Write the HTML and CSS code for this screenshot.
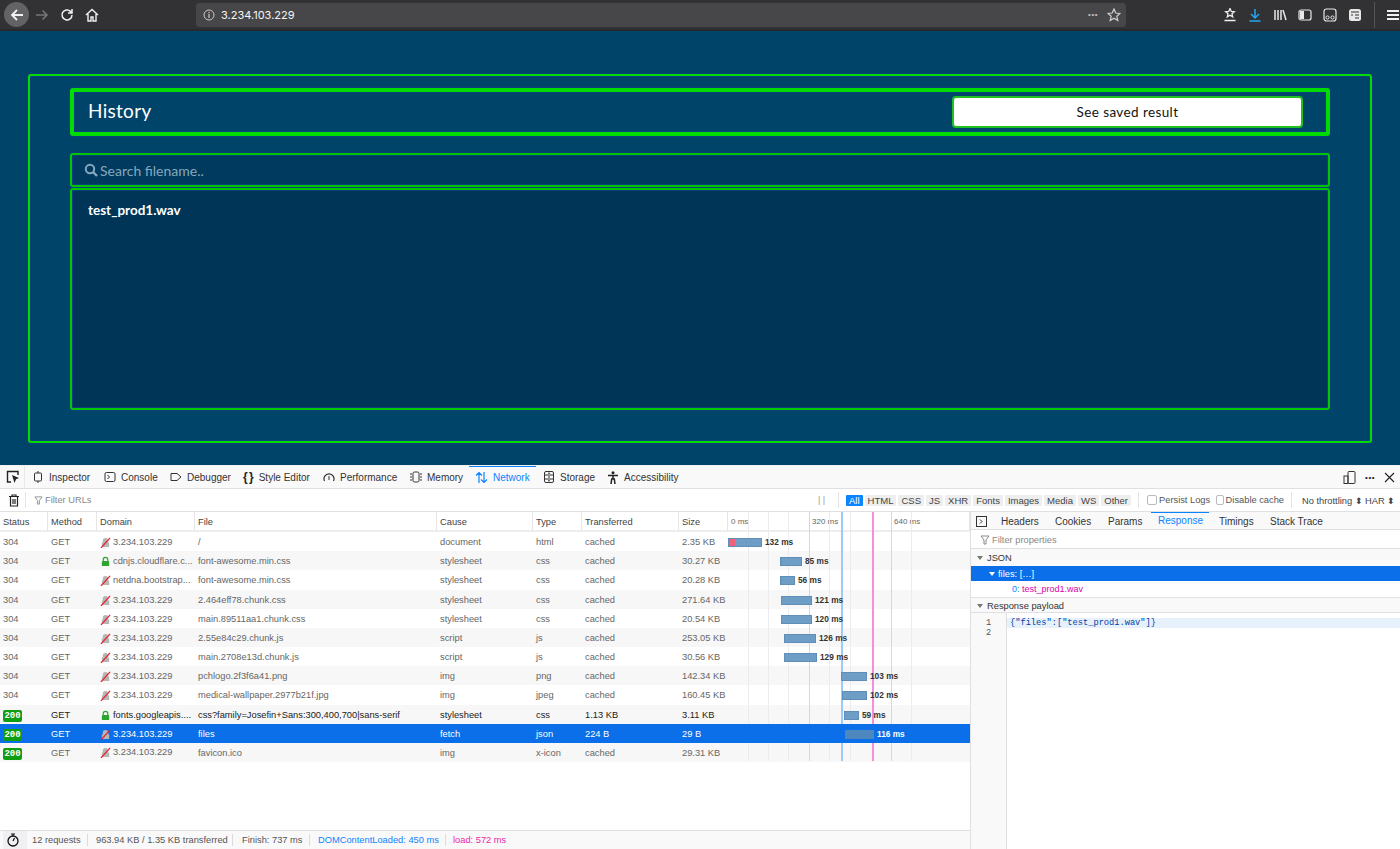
FILE: index.html
```html
<!DOCTYPE html>
<html lang="en">
<head>
  <meta charset="UTF-8">
  <title>3.234.103.229</title>
  <link rel="stylesheet" href="styles.css">
</head>
<body>

  <svg class="defs" width="0" height="0">
    <symbol id="i-nolock" viewBox="0 0 12 12">
      <path d="M3 6V4a3 3 0 0 1 6 0v2h1v5H2V6z" fill="#b5b5b5"/>
      <path d="M1 12L11 1" stroke="#e8202a" stroke-width="1.3"/>
    </symbol>
    <symbol id="i-lock" viewBox="0 0 12 12">
      <path d="M3.5 6V4a2.5 2.5 0 0 1 5 0v2" fill="none" stroke="currentColor" stroke-width="1.3"/>
      <rect x="2" y="5.5" width="8" height="5.5" rx="1" fill="currentColor"/>
    </symbol>
    <symbol id="i-filter" viewBox="0 0 10 10">
      <path d="M1 1h8L6 5v4H4V5z" fill="none" stroke="#8a8a8a"/>
    </symbol>
  </svg>

  <!-- browser toolbar -->
  <header class="browser-bar">
    <div class="nav-btns">
      <span class="nav-btn back">
        <svg width="16" height="16" viewBox="0 0 16 16"><path d="M14 8H3M8 3L3 8l5 5" fill="none" stroke="#f2f2f2" stroke-width="1.8"/></svg>
      </span>
      <span class="nav-btn">
        <svg width="14" height="14" viewBox="0 0 14 14"><path d="M1 7h11M7.5 2.5L12 7l-4.5 4.5" fill="none" stroke="#77777a" stroke-width="1.5"/></svg>
      </span>
      <span class="nav-btn">
        <svg width="14" height="14" viewBox="0 0 14 14"><path d="M12 7a5 5 0 1 1-1.5-3.6L12 5M12 1v4H8" fill="none" stroke="#f2f2f2" stroke-width="1.5"/></svg>
      </span>
      <span class="nav-btn">
        <svg width="14" height="14" viewBox="0 0 14 14"><path d="M1 7l6-5.5L13 7M3 6v7h3V9h2v4h3V6" fill="none" stroke="#f2f2f2" stroke-width="1.4"/></svg>
      </span>
    </div>
    <div class="url-bar">
      <svg class="url-info" width="12" height="12" viewBox="0 0 12 12"><circle cx="6" cy="6" r="5" fill="none" stroke="#c8c8c8"/><path d="M6 5v4M6 3v1.2" stroke="#c8c8c8" stroke-width="1.2"/></svg>
      <span class="url-text">3.234.103.229</span>
      <span class="url-dots">•••</span>
      <svg width="14" height="14" viewBox="0 0 14 14"><path d="M7 1l1.8 4 4.2.4-3.2 2.8 1 4.3L7 10.300l-3.8 2.2 1-4.3L1 5.400 5.200 5z" fill="none" stroke="#d0d0d0" stroke-width="1.2"/></svg>
    </div>
    <div class="tool-icons">
      <svg width="14" height="14" viewBox="0 0 14 14"><path d="M7 .5l1.300 3 3 .3-2.300 2 .7 3L7 7.200 4.300 8.800l.7-3-2.300-2 3-.3zM1.500 12.500h11" fill="none" stroke="#f0f0f0" stroke-width="1.3"/></svg>
      <svg width="14" height="14" viewBox="0 0 14 14"><path d="M7 1v8M3 6l4 4 4-4M1.500 13h11" fill="none" stroke="#20a8f0" stroke-width="1.5"/></svg>
      <svg width="14" height="14" viewBox="0 0 14 14"><path d="M2 2v10M5 2v10M8 2v10M10 2l3 10" fill="none" stroke="#e8e8e8" stroke-width="1.5"/></svg>
      <svg width="14" height="14" viewBox="0 0 14 14"><rect x="1" y="2" width="12" height="10" rx="2" fill="none" stroke="#e8e8e8" stroke-width="1.2"/><path d="M2 3h4v8H2z" fill="#e8e8e8"/></svg>
      <svg width="14" height="14" viewBox="0 0 14 14"><rect x="1" y="1" width="12" height="12" rx="2.500" fill="none" stroke="#e8e8e8" stroke-width="1.2"/><circle cx="4.500" cy="9.500" r="1.600" fill="none" stroke="#e8e8e8"/><circle cx="9.500" cy="9.500" r="1.600" fill="none" stroke="#e8e8e8"/></svg>
      <svg width="14" height="14" viewBox="0 0 14 14"><rect x="1" y="1" width="12" height="12" rx="2.500" fill="#e8e8e8"/><path d="M3 4h8M7 7h4M7 10h4M3 7h2" stroke="#323234" stroke-width="1.2"/></svg>
      <span class="tool-sep"></span>
      <svg width="14" height="14" viewBox="0 0 14 14"><path d="M1 3h12M1 7h12M1 11h12" stroke="#f0f0f0" stroke-width="1.8"/></svg>
    </div>
  </header>

  <!-- page content -->
  <main class="page">
    <section class="outer-box">
      <div class="history-head">
        <h1>History</h1>
        <button class="saved-btn">See saved result</button>
      </div>
      <div class="search-box">
        <svg width="14" height="14" viewBox="0 0 14 14"><circle cx="6" cy="6" r="4.200" fill="none" stroke="#86a8bd" stroke-width="2"/><path d="M9 9l4 4" stroke="#86a8bd" stroke-width="2.400"/></svg>
        <span>Search filename..</span>
      </div>
      <div class="file-list">
        <div class="file-item">test_prod1.wav</div>
      </div>
    </section>
  </main>

  <!-- devtools -->
  <section class="devtools">
    <div class="dt-tabs">
      <span class="pick-icon">
        <svg width="14" height="14" viewBox="0 0 14 14"><path d="M5 12H1.500V1.500H12V5" fill="none" stroke="#222" stroke-width="1.4"/><path d="M6 5l7 3-3 1.200L8.500 13z" fill="#222"/></svg>
      </span>
      <span class="dt-tab tab-inspector">
        <svg width="12" height="12" viewBox="0 0 12 12"><rect x="2.500" y="2" width="7" height="8" rx="1" fill="none" stroke="#333"/><path d="M6 0v2M6 10v2" stroke="#333"/></svg>Inspector
      </span>
      <span class="dt-tab tab-console">
        <svg width="12" height="12" viewBox="0 0 12 12"><rect x="1" y="1.500" width="10" height="9" rx="1.500" fill="none" stroke="#333"/><path d="M3.500 4L5.500 6 3.500 8" fill="none" stroke="#333"/></svg>Console
      </span>
      <span class="dt-tab tab-debugger">
        <svg width="12" height="12" viewBox="0 0 12 12"><path d="M1 2.500h6l4 3.500-4 3.500H1z" fill="none" stroke="#333"/></svg>Debugger
      </span>
      <span class="dt-tab tab-style">
        <span class="braces">{ }</span>Style Editor
      </span>
      <span class="dt-tab tab-perf">
        <svg width="12" height="12" viewBox="0 0 12 12"><path d="M1.500 10A5 5 0 1 1 10.500 10" fill="none" stroke="#333" stroke-width="1.2"/><path d="M6 9V5" stroke="#333"/></svg>Performance
      </span>
      <span class="dt-tab tab-memory">
        <svg width="12" height="12" viewBox="0 0 12 12"><rect x="3" y="1" width="6" height="10" rx="1.500" fill="none" stroke="#333"/><path d="M0 3h2M0 6h2M0 9h2M10 3h2M10 6h2M10 9h2" stroke="#333"/></svg>Memory
      </span>
      <span class="dt-tab tab-network">
        <svg width="13" height="13" viewBox="0 0 13 13"><path d="M4 12V1.500M1 4.500l3-3 3 3M9 1v10.500M6 8.500l3 3 3-3" fill="none" stroke="#0a84ff" stroke-width="1.2"/></svg>Network
      </span>
      <span class="dt-tab tab-storage">
        <svg width="12" height="12" viewBox="0 0 12 12"><rect x="1.500" y=".5" width="9" height="11" rx="1.500" fill="none" stroke="#333"/><path d="M1.500 4h9M1.500 8h9M5 2.200h2M5 6h2M5 9.800h2" stroke="#333"/></svg>Storage
      </span>
      <span class="dt-tab tab-a11y">
        <svg width="12" height="13" viewBox="0 0 12 13"><circle cx="6" cy="1.800" r="1.500" fill="#222"/><path d="M1 4.500h10M6 4.500V8M4 13l.7-5h2.600l.7 5" fill="none" stroke="#222" stroke-width="1.5"/></svg>Accessibility
      </span>
      <span class="dt-right">
        <svg width="13" height="13" viewBox="0 0 13 13"><rect x="5" y=".5" width="7" height="12" rx="1" fill="none" stroke="#333"/><rect x="1" y="5" width="4" height="7.500" fill="none" stroke="#333"/></svg>
        <span class="dots">•••</span>
        <svg width="11" height="11" viewBox="0 0 11 11"><path d="M1 1l9 9M10 1l-9 9" stroke="#222" stroke-width="1.1"/></svg>
      </span>
    </div>

    <div class="dt-filter">
      <svg class="trash" width="12" height="13" viewBox="0 0 12 13"><path d="M1 2.500h10M4 2.500V1h4v1.500M2.500 2.500V12h7V2.500M5 5v5M7 5v5" fill="none" stroke="#222" stroke-width="1.2"/></svg>
      <span class="vsep sep-trash"></span>
      <svg width="9" height="9"><use href="#i-filter"/></svg>
      <span class="filter-url">Filter URLs</span>
      <span class="pause">| |</span>
      <span class="vsep"></span>
      <div class="chips">
        <span class="chip chip-on">All</span>
        <span class="chip">HTML</span>
        <span class="chip">CSS</span>
        <span class="chip">JS</span>
        <span class="chip">XHR</span>
        <span class="chip">Fonts</span>
        <span class="chip">Images</span>
        <span class="chip">Media</span>
        <span class="chip">WS</span>
        <span class="chip">Other</span>
      </div>
      <span class="vsep sep-chips"></span>
      <label class="check check-persist"><i></i>Persist Logs</label>
      <label class="check check-cache"><i></i>Disable cache</label>
      <span class="vsep"></span>
      <span class="throttle">No throttling ⬍</span>
      <span class="har">HAR ⬍</span>
    </div>

    <div class="dt-body">
      <div class="net-pane">
        <div class="net-table">
          <div class="net-row net-head">
            <span>Status</span><span>Method</span><span>Domain</span><span>File</span><span>Cause</span><span>Type</span><span>Transferred</span><span>Size</span>
            <span class="tl-head"><em class="t0">0 ms</em><em class="t320">320 ms</em><em class="t640">640 ms</em></span>
          </div>

          <div class="net-row">
            <span>304</span><span>GET</span><span class="dom"><svg><use href="#i-nolock"/></svg>3.234.103.229</span><span>/</span><span>document</span><span>html</span><span>cached</span><span>2.35 KB</span>
            <span class="tl"><b class="bar" style="margin-left:0;width:34px"><u style="width:6px"></u></b>132 ms</span>
          </div>
          <div class="net-row">
            <span>304</span><span>GET</span><span class="dom"><svg class="ok"><use href="#i-lock"/></svg>cdnjs.cloudflare.c...</span><span>font-awesome.min.css</span><span>stylesheet</span><span>css</span><span>cached</span><span>30.27 KB</span>
            <span class="tl"><b class="bar" style="margin-left:52px;width:22px"><u style="width:1px"></u></b>85 ms</span>
          </div>
          <div class="net-row">
            <span>304</span><span>GET</span><span class="dom"><svg><use href="#i-nolock"/></svg>netdna.bootstrap...</span><span>font-awesome.min.css</span><span>stylesheet</span><span>css</span><span>cached</span><span>20.28 KB</span>
            <span class="tl"><b class="bar" style="margin-left:52px;width:15px"><u style="width:1px"></u></b>56 ms</span>
          </div>
          <div class="net-row">
            <span>304</span><span>GET</span><span class="dom"><svg><use href="#i-nolock"/></svg>3.234.103.229</span><span>2.464eff78.chunk.css</span><span>stylesheet</span><span>css</span><span>cached</span><span>271.64 KB</span>
            <span class="tl"><b class="bar" style="margin-left:53px;width:31px"></b>121 ms</span>
          </div>
          <div class="net-row">
            <span>304</span><span>GET</span><span class="dom"><svg><use href="#i-nolock"/></svg>3.234.103.229</span><span>main.89511aa1.chunk.css</span><span>stylesheet</span><span>css</span><span>cached</span><span>20.54 KB</span>
            <span class="tl"><b class="bar" style="margin-left:53px;width:31px"></b>120 ms</span>
          </div>
          <div class="net-row">
            <span>304</span><span>GET</span><span class="dom"><svg><use href="#i-nolock"/></svg>3.234.103.229</span><span>2.55e84c29.chunk.js</span><span>script</span><span>js</span><span>cached</span><span>253.05 KB</span>
            <span class="tl"><b class="bar" style="margin-left:56px;width:32px"></b>126 ms</span>
          </div>
          <div class="net-row">
            <span>304</span><span>GET</span><span class="dom"><svg><use href="#i-nolock"/></svg>3.234.103.229</span><span>main.2708e13d.chunk.js</span><span>script</span><span>js</span><span>cached</span><span>30.56 KB</span>
            <span class="tl"><b class="bar" style="margin-left:56px;width:33px"></b>129 ms</span>
          </div>
          <div class="net-row">
            <span>304</span><span>GET</span><span class="dom"><svg><use href="#i-nolock"/></svg>3.234.103.229</span><span>pchlogo.2f3f6a41.png</span><span>img</span><span>png</span><span>cached</span><span>142.34 KB</span>
            <span class="tl"><b class="bar" style="margin-left:113px;width:26px"></b>103 ms</span>
          </div>
          <div class="net-row">
            <span>304</span><span>GET</span><span class="dom"><svg><use href="#i-nolock"/></svg>3.234.103.229</span><span>medical-wallpaper.2977b21f.jpg</span><span>img</span><span>jpeg</span><span>cached</span><span>160.45 KB</span>
            <span class="tl"><b class="bar" style="margin-left:114px;width:25px"></b>102 ms</span>
          </div>
          <div class="net-row net-fresh">
            <span><i class="badge">200</i></span><span>GET</span><span class="dom"><svg class="ok"><use href="#i-lock"/></svg>fonts.googleapis....</span><span>css?family=Josefin+Sans:300,400,700|sans-serif</span><span>stylesheet</span><span>css</span><span>1.13 KB</span><span>3.11 KB</span>
            <span class="tl"><b class="bar" style="margin-left:116px;width:15px"></b>59 ms</span>
          </div>
          <div class="net-row net-sel">
            <span><i class="badge">200</i></span><span>GET</span><span class="dom"><svg><use href="#i-nolock"/></svg>3.234.103.229</span><span>files</span><span>fetch</span><span>json</span><span>224 B</span><span>29 B</span>
            <span class="tl"><b class="bar" style="margin-left:117px;width:29px"></b>116 ms</span>
          </div>
          <div class="net-row">
            <span><i class="badge">200</i></span><span>GET</span><span class="dom"><svg><use href="#i-nolock"/></svg>3.234.103.229</span><span>favicon.ico</span><span>img</span><span>x-icon</span><span>cached</span><span>29.31 KB</span>
            <span class="tl"></span>
          </div>

          <div class="tl-lines">
            <i style="left:20px"></i><i style="left:40px"></i><i style="left:60px"></i><i class="major" style="left:81px"></i><i style="left:101px"></i><i style="left:122px"></i><i class="major" style="left:163px"></i><i style="left:183px"></i>
            <i class="dom-line" style="left:113px"></i><i class="load-line" style="left:144px"></i>
          </div>
        </div>

        <div class="net-status">
          <span class="clock">
            <svg width="12" height="14" viewBox="0 0 12 14"><circle cx="6" cy="8" r="5" fill="none" stroke="#111" stroke-width="1.3"/><path d="M4 1h4M6 1v2M6 8l1.500-3" stroke="#111" stroke-width="1.2"/></svg>
          </span>
          <span class="st st-req">12 requests</span>
          <span class="st st-size">963.94 KB / 1.35 KB transferred</span>
          <span class="st st-fin">Finish: 737 ms</span>
          <span class="st st-dom">DOMContentLoaded: 450 ms</span>
          <span class="st-load">load: 572 ms</span>
        </div>
      </div>

      <aside class="side-pane">
        <div class="side-tabs">
          <svg class="side-toggle" width="11" height="11" viewBox="0 0 11 11"><rect x=".5" y=".5" width="10" height="10" fill="none" stroke="#333"/><path d="M4 3.500L6 5.500 4 7.500" fill="none" stroke="#333"/></svg>
          <span>Headers</span><span>Cookies</span><span>Params</span><span class="side-active">Response</span><span>Timings</span><span>Stack Trace</span>
        </div>
        <div class="prop-filter">
          <svg width="10" height="10"><use href="#i-filter"/></svg>
          <span>Filter properties</span>
        </div>
        <div class="acc-head"><i class="tri"></i>JSON</div>
        <div class="json-sel"><i class="tri tri-w"></i>files: […]</div>
        <div class="json-item"><span class="k">0:</span> <span class="v">test_prod1.wav</span></div>
        <div class="acc-head acc-payload"><i class="tri"></i>Response payload</div>
        <div class="code">
          <div class="gutter"><div>1</div><div>2</div></div>
          <div class="code-main"><div class="code-line">{"files":["test_prod1.wav"]}</div></div>
        </div>
      </aside>
    </div>
  </section>

</body>
</html>
```

FILE: styles.css
```css
* {
  box-sizing: border-box;
}
html, body {
  margin: 0;
  height: 849px;
  overflow: hidden;
}
body {
  display: flex;
  flex-direction: column;
  font-family: "Liberation Sans", sans-serif;
  background: #fff;
}
.defs {
  position: absolute;
}

/* browser toolbar */
.browser-bar {
  height: 31px;
  display: flex;
  align-items: center;
  background: #323234;
  border-bottom: 2px solid #29292b;
  flex: none;
}
.nav-btns {
  display: flex;
  align-items: center;
  width: 196px;
  flex: none;
  padding-left: 4px;
}
.nav-btn {
  width: 25px;
  height: 25px;
  display: flex;
  align-items: center;
  justify-content: center;
}
.back {
  background: #636365;
  border-radius: 50%;
}
.url-bar {
  width: 930px;
  flex: none;
  height: 24px;
  background: #474749;
  border-radius: 4px;
  display: flex;
  align-items: center;
  padding: 0 5px 0 7px;
}
.url-text {
  margin-left: 6px;
  color: #f5f5f5;
  font: 11px "Inter", sans-serif;
  flex: 1;
}
.url-dots {
  color: #c0c0c0;
  font-size: 8px;
  margin-right: 9px;
  letter-spacing: .5px;
}
.tool-icons {
  flex: 1;
  display: flex;
  align-items: center;
  gap: 11px;
  padding-left: 97px;
}
.tool-sep {
  width: 1px;
  height: 26px;
  background: #555;
  margin-left: 1px;
}

/* page */
.page {
  height: 434px;
  flex: none;
  background: #004469;
  padding: 43px 28px 0;
}
.outer-box,
.history-head,
.search-box,
.file-list {
  box-shadow: 0 0 0 1px #0b3f7d, inset 0 0 0 1px #0b3f7d;
}
.outer-box {
  height: 369px;
  border: 2px solid #00dc00;
  border-radius: 3px;
  padding: 12px 40px 0;
}
.history-head {
  height: 48px;
  border: 4px solid #00dc00;
  border-radius: 3px;
  display: flex;
  align-items: center;
  justify-content: space-between;
  padding: 0 23px 0 14px;
}
.history-head h1 {
  margin: 0 0 3px;
  color: #fff;
  font: 400 19px "Lato", sans-serif;
  letter-spacing: .3px;
}
.saved-btn {
  width: 351px;
  height: 32px;
  background: #fff;
  border: 2px solid #1fc01f;
  border-radius: 4px;
  color: #111;
  font: 400 13.5px "Lato", sans-serif;
  letter-spacing: .4px;
}
.search-box {
  margin-top: 17px;
  height: 34px;
  background: #003a5e;
  border: 2px solid #00c800;
  border-radius: 3px;
  display: flex;
  align-items: center;
  gap: 2px;
  padding-left: 12px;
  color: #86a8bd;
  font: 400 14px "Lato", sans-serif;
}
.file-list {
  margin-top: 1px;
  height: 222px;
  background: #003557;
  border: 2px solid #00c800;
  border-radius: 3px;
  padding: 12px 16px;
}
.file-item {
  color: #fff;
  font: 700 13.5px "Lato", sans-serif;
}

/* devtools */
.devtools {
  flex: 1;
  display: flex;
  flex-direction: column;
  min-height: 0;
  font-size: 9.3px;
  color: #666;
}
.dt-tabs {
  height: 24px;
  flex: none;
  display: flex;
  align-items: center;
  background: #f9f9fa;
  border-top: 1px solid #f0f0f2;
  border-bottom: 1px solid #e0e0e2;
  color: #333;
  font-size: 10px;
}
.pick-icon {
  width: 25px;
  padding-left: 6px;
  height: 100%;
  display: flex;
  align-items: center;
  border-right: 1px solid #e8e8e8;
  margin-right: 7px;
}
.dt-tab {
  display: flex;
  align-items: center;
  gap: 5px;
  height: 100%;
}
.tab-inspector { width: 72px; }
.tab-console { width: 66px; }
.tab-debugger { width: 73px; }
.tab-style { width: 80px; }
.tab-perf { width: 87px; }
.tab-memory { width: 59px; }
.tab-network {
  width: 67px;
  padding-left: 6px;
  margin-right: 7px;
  color: #0a84ff;
  border-top: 1px solid #0a84ff;
}
.tab-storage { width: 64px; }
.braces {
  font-weight: bold;
  font-size: 12px;
  color: #222;
  letter-spacing: -1px;
  margin-right: 1px;
}
.dt-right {
  margin-left: auto;
  display: flex;
  align-items: center;
  gap: 9px;
  padding-right: 5px;
}
.dots {
  font-size: 8px;
  color: #222;
  letter-spacing: .5px;
}

.dt-filter {
  height: 23px;
  flex: none;
  display: flex;
  align-items: center;
  background: #fff;
  border-bottom: 1px solid #e0e0e2;
  padding-left: 8px;
  color: #888;
  white-space: nowrap;
}
.trash {
  flex: none;
}
.vsep {
  width: 1px;
  height: 16px;
  background: #e4e4e6;
  margin: 0 7px;
  flex: none;
}
.sep-trash {
  margin-left: 5px;
  margin-right: 8px;
}
.filter-url {
  margin-left: 2px;
  width: 773px;
}
.pause {
  color: #999;
  font-size: 9px;
  width: 13px;
}
.chips {
  display: flex;
  gap: 2px;
  color: #444;
}
.chip {
  height: 11px;
  line-height: 11px;
  background: #eeeeef;
  padding: 0 3px;
  border-radius: 1px;
  font-size: 9.5px;
}
.chip-on {
  background: #0a84ff;
  color: #fff;
}
.sep-chips {
  margin-right: 8px;
}
.check {
  display: flex;
  align-items: center;
  gap: 2px;
  color: #555;
}
.check i {
  width: 10px;
  height: 10px;
  border: 1px solid #bbb;
  border-radius: 2px;
  background: #fff;
}
.check-persist { width: 69px; }
.check-cache { width: 68px; }
.throttle {
  margin-left: 3px;
  color: #444;
  width: 63px;
}
.har {
  color: #444;
}

.dt-body {
  flex: 1;
  display: flex;
  min-height: 0;
}
.net-pane {
  width: 971px;
  flex: none;
  display: flex;
  flex-direction: column;
  border-right: 1px solid #e0e0e2;
}
.net-table {
  flex: 1;
  position: relative;
}
.net-row {
  display: grid;
  grid-template-columns: 48px 49px 98px 242px 96px 49px 97px 49px 1fr;
  height: 19.18px;
  line-height: 19px;
  white-space: nowrap;
}
.net-row > span {
  padding-top: 1px;
  padding-left: 3px;
  overflow: hidden;
}
.net-row:nth-child(odd) {
  background: #f7f7f7;
}
.net-row:nth-child(even) {
  background: #fff;
}
.net-row.net-head {
  height: 20px;
  background: #fff;
  border-bottom: 2px solid #ededf0;
  color: #444;
}
.net-head > span {
  border-right: 1px solid #e6e6e8;
}
.net-fresh {
  color: #222;
}
.net-row.net-sel {
  position: relative;
  z-index: 1;
  background: #0a6fe8;
  color: #fff;
}
.dom {
  display: flex;
  align-items: center;
  gap: 2px;
}
.dom svg {
  width: 11px;
  height: 11px;
  flex: none;
  color: #5a5a5a;
}
.dom svg.ok {
  color: #2ea52e;
}
.badge {
  display: inline-block;
  width: 19px;
  height: 12px;
  text-align: center;
  background: #0f9e0f;
  color: #fff;
  border-radius: 2px;
  font: bold 9px/12px "Liberation Mono", monospace;
}
.tl {
  display: flex;
  align-items: center;
  font-size: 8.3px;
  font-weight: bold;
  color: #333;
}
.net-row > .tl {
  padding-left: 0;
  overflow: visible;
  position: relative;
  z-index: 1;
}
.net-sel .tl {
  color: #fff;
}
.bar {
  display: block;
  height: 9px;
  background: #6e9ec6;
  border: 1px solid #5f8fb8;
  margin-right: 3px;
  flex: none;
}
.bar u {
  display: block;
  height: 100%;
  background: #f0607a;
}
.net-sel .bar {
  background: #4d87bd;
  border-color: #4d87bd;
}
.tl-head {
  position: relative;
}
.tl-head em {
  position: absolute;
  top: 0;
  font-style: normal;
  font-size: 8px;
  color: #666;
}
.t0 { left: 3px; }
.t320 { left: 84px; }
.t640 { left: 166px; }
.tl-lines {
  position: absolute;
  left: 728px;
  top: 0;
  width: 241px;
  height: 249px;
}
.tl-lines i {
  position: absolute;
  top: 0;
  bottom: 0;
  width: 1px;
  background: #ececee;
}
.tl-lines i.major {
  background: #d8d8da;
}
.tl-lines i.dom-line {
  width: 2px;
  background: #9ccbf5;
}
.tl-lines i.load-line {
  width: 2px;
  background: #f590d8;
}
.net-status {
  height: 19px;
  flex: none;
  display: flex;
  align-items: center;
  background: #f9f9fa;
  border-top: 1px solid #e0e0e2;
  color: #555;
  white-space: nowrap;
}
.clock {
  width: 24px;
  height: 100%;
  margin-left: 3px;
  padding-left: 4px;
  display: flex;
  align-items: center;
  background: #f0f0f2;
}
.st {
  height: 12px;
  line-height: 12px;
  border-right: 1px solid #dcdcde;
}
.st-req { margin-left: 5px; width: 56px; }
.st-size { margin-left: 8px; width: 137px; }
.st-fin { margin-left: 9px; width: 68px; }
.st-dom { margin-left: 8px; width: 128px; color: #0a84ff; }
.st-load { margin-left: 7px; color: #ed1fa8; }

.side-pane {
  flex: 1;
  display: flex;
  flex-direction: column;
  min-width: 0;
  color: #333;
}
.side-tabs {
  height: 18px;
  flex: none;
  display: grid;
  grid-template-columns: 25px 54px 53px 42px 69px 51px auto;
  align-items: center;
  background: #f9f9fa;
  border-bottom: 1px solid #e0e0e2;
  padding: 1px 0 0 5px;
  font-size: 10px;
}
.side-active {
  width: 60px;
  height: 100%;
  line-height: 16px;
  padding-left: 8px;
  color: #0a84ff;
  box-shadow: 0 -2px 0 -1px #0a84ff;
}
.prop-filter {
  height: 19px;
  flex: none;
  display: flex;
  align-items: center;
  gap: 2px;
  padding: 1px 0 0 9px;
  color: #888;
  border-bottom: 1px solid #e0e0e2;
}
.acc-head {
  height: 17px;
  flex: none;
  background: #f9f9fa;
  padding-left: 6px;
  display: flex;
  align-items: center;
  gap: 4px;
}
.acc-payload {
  height: 16px;
  padding-top: 1px;
  border-top: 1px solid #e0e0e2;
  border-bottom: 1px solid #e0e0e2;
}
.tri {
  width: 0;
  height: 0;
  border-left: 3.5px solid transparent;
  border-right: 3.5px solid transparent;
  border-top: 4.5px solid #777;
}
.tri-w {
  border-top-color: #fff;
}
.json-sel {
  height: 15px;
  flex: none;
  background: #0a6fe8;
  color: #fff;
  padding-left: 18px;
  display: flex;
  align-items: center;
  gap: 3px;
}
.json-item {
  height: 16px;
  line-height: 16px;
  flex: none;
  padding-left: 41px;
  font-size: 9px;
}
.json-item .k { color: #0a84ff; }
.json-item .v { color: #dd00a9; }
.code {
  flex: 1;
  display: flex;
  font: 8.7px/10px "Liberation Mono", monospace;
  min-height: 0;
}
.gutter {
  width: 36px;
  flex: none;
  padding-top: 5px;
  padding-left: 15px;
  background: #f9f9fa;
  border-right: 1px solid #e0e0e2;
  color: #555;
}
.code-main {
  flex: 1;
  padding-top: 5px;
}
.code-line {
  background: #e6f1fc;
  padding-left: 3px;
  color: #003eaa;
}
```
